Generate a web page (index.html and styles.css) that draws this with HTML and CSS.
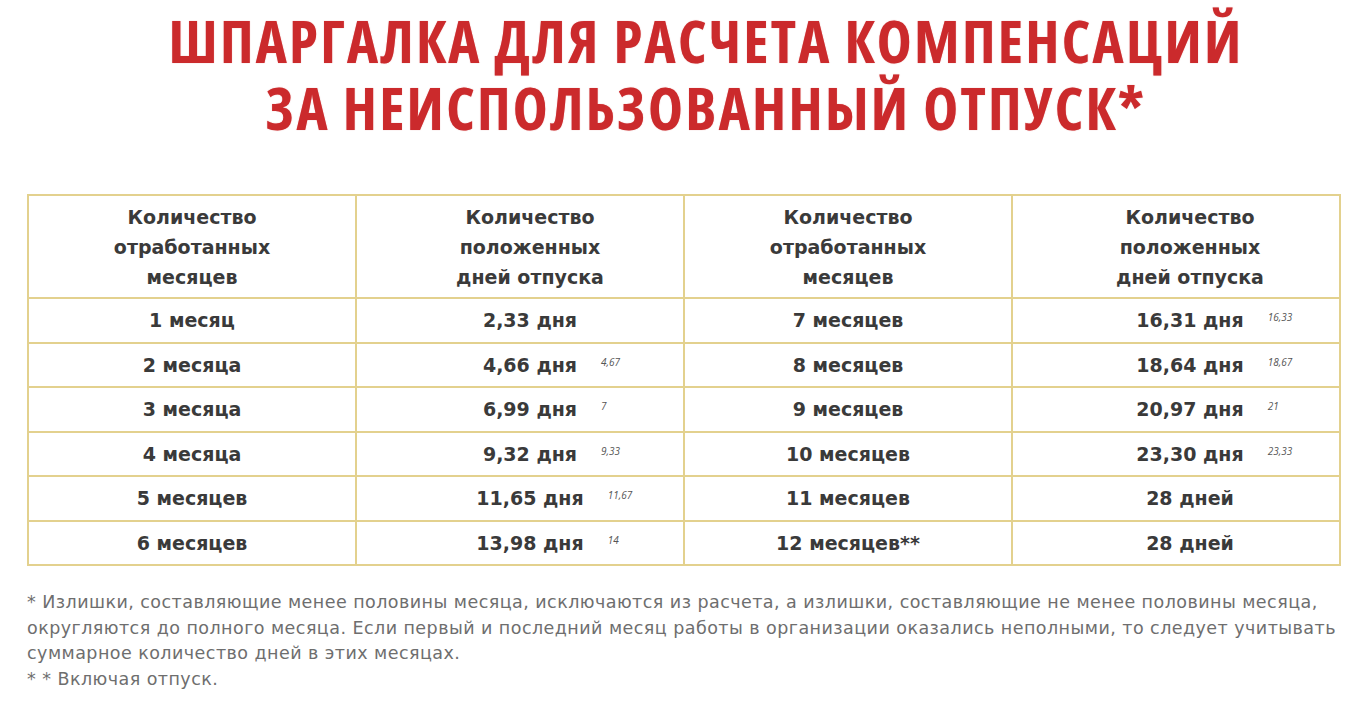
FILE: index.html
```html
<!DOCTYPE html>
<html lang="ru">
<head>
<meta charset="utf-8">
<title>Шпаргалка для расчета компенсаций</title>
<link rel="stylesheet" href="styles.css">
</head>
<body>
<div class="page">
  <h1 class="title">
    <span class="title-line">ШПАРГАЛКА ДЛЯ РАСЧЕТА КОМПЕНСАЦИЙ</span>
    <span class="title-line">ЗА НЕИСПОЛЬЗОВАННЫЙ ОТПУСК*</span>
  </h1>
  <table class="sheet">
    <thead>
      <tr>
        <th class="c1">Количество<br>отработанных<br>месяцев</th>
        <th class="c2">Количество<br>положенных<br>дней отпуска</th>
        <th class="c3">Количество<br>отработанных<br>месяцев</th>
        <th class="c4">Количество<br>положенных<br>дней отпуска</th>
      </tr>
    </thead>
    <tbody>
      <tr>
        <td class="c1">1 месяц</td>
        <td class="c2"><span class="val">2,33 дня</span></td>
        <td class="c3">7 месяцев</td>
        <td class="c4"><span class="val">16,31 дня<span class="note">16,33</span></span></td>
      </tr>
      <tr>
        <td class="c1">2 месяца</td>
        <td class="c2"><span class="val">4,66 дня<span class="note">4,67</span></span></td>
        <td class="c3">8 месяцев</td>
        <td class="c4"><span class="val">18,64 дня<span class="note">18,67</span></span></td>
      </tr>
      <tr>
        <td class="c1">3 месяца</td>
        <td class="c2"><span class="val">6,99 дня<span class="note">7</span></span></td>
        <td class="c3">9 месяцев</td>
        <td class="c4"><span class="val">20,97 дня<span class="note">21</span></span></td>
      </tr>
      <tr>
        <td class="c1">4 месяца</td>
        <td class="c2"><span class="val">9,32 дня<span class="note">9,33</span></span></td>
        <td class="c3">10 месяцев</td>
        <td class="c4"><span class="val">23,30 дня<span class="note">23,33</span></span></td>
      </tr>
      <tr>
        <td class="c1">5 месяцев</td>
        <td class="c2"><span class="val">11,65 дня<span class="note">11,67</span></span></td>
        <td class="c3">11 месяцев</td>
        <td class="c4"><span class="val">28 дней</span></td>
      </tr>
      <tr>
        <td class="c1">6 месяцев</td>
        <td class="c2"><span class="val">13,98 дня<span class="note">14</span></span></td>
        <td class="c3">12 месяцев**</td>
        <td class="c4"><span class="val">28 дней</span></td>
      </tr>
    </tbody>
  </table>
  <div class="notes">
    <p>* Излишки, составляющие менее половины месяца, исключаются из расчета, а излишки, составляющие не менее половины месяца,<br>округляются до полного месяца. Если первый и последний месяц работы в организации оказались неполными, то следует учитывать<br>суммарное количество дней в этих месяцах.</p>
    <p>* * Включая отпуск.</p>
  </div>
</div>
</body>
</html>
```
FILE: styles.css
```css
html, body {
  margin: 0;
  padding: 0;
  background: #ffffff;
}

.page {
  width: 1366px;
  height: 706px;
  overflow: hidden;
  box-sizing: border-box;
  padding: 7px 25px 0 27px;
  font-family: "DejaVu Sans", "Open Sans", sans-serif;
}

.title {
  margin: 0;
  padding-left: 44px;
  display: flex;
  flex-direction: column;
  align-items: center;
  color: #cb2a2c;
  font-family: "Open Sans", "DejaVu Sans Condensed", sans-serif;
  font-weight: 700;
  font-stretch: 75%;
  font-size: 59px;
  line-height: 67px;
  letter-spacing: 2.3px;
  text-shadow: 0 0 1px rgba(203, 42, 44, 0.5);
}

.title-line {
  display: block;
  white-space: nowrap;
}

.sheet {
  margin-top: 53px;
  width: 1314px;
  border-collapse: collapse;
  table-layout: fixed;
  border: 2px solid #dcc67a;
  color: #3a3a3a;
}

.sheet th,
.sheet td {
  border: 2px solid #e3d18e;
  text-align: center;
  padding: 0;
}

.sheet th {
  height: 101px;
  font-size: 19px;
  font-weight: 700;
  line-height: 30px;
}

.sheet td {
  height: 42.5px;
  font-size: 19px;
  font-weight: 700;
}

.sheet .c2 { padding-left: 20px; }
.sheet .c4 { padding-left: 28px; }

.val {
  position: relative;
  display: inline-block;
}

.note {
  position: absolute;
  left: calc(100% + 24px);
  top: 1px;
  font-family: "Open Sans", sans-serif;
  font-size: 10px;
  font-style: italic;
  font-weight: 400;
  color: #555;
  white-space: nowrap;
}

.notes {
  margin-top: 24px;
  color: #6e6e6e;
  font-size: 17.5px;
  letter-spacing: 0.45px;
  line-height: 25.5px;
}

.notes p {
  margin: 0;
  white-space: nowrap;
}
```
